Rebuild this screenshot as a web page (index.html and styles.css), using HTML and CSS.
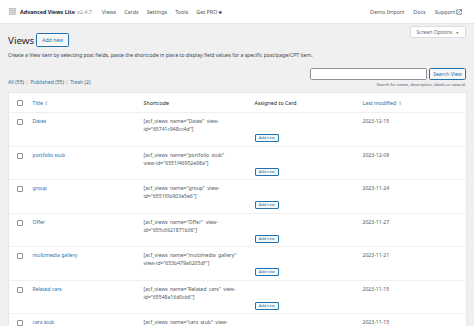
FILE: index.html
```html
<!DOCTYPE html>
<html lang="en">
<head>
    <meta charset="UTF-8">
    <meta name="viewport" content="width=device-width, initial-scale=1.0">
    <title>Views</title>
    <link rel="stylesheet" href="styles.css">
</head>
<body>
    <div class="topbar">
        <div class="brand">
            <svg class="logo" width="7" height="7" viewBox="0 0 7 7">
                <rect x="0.5" y="0.5" width="6" height="6" fill="#dcdcde" stroke="#a7aaad" stroke-width="0.6"/>
                <line x1="1.5" y1="2.5" x2="5.5" y2="2.5" stroke="#a7aaad" stroke-width="0.6"/>
                <line x1="1.5" y1="4.5" x2="5.5" y2="4.5" stroke="#a7aaad" stroke-width="0.6"/>
            </svg>
            <span class="brand-name">Advanced Views Lite</span>
            <span class="version">v2.4.7</span>
        </div>
        <nav class="nav">
            <a href="#">Views</a>
            <a href="#">Cards</a>
            <a href="#">Settings</a>
            <a href="#">Tools</a>
            <a href="#">Get PRO <span class="star">&#9733;</span></a>
        </nav>
        <nav class="nav nav-right">
            <a href="#">Demo Import</a>
            <a href="#">Docs</a>
            <a href="#">Support<svg class="ext" width="6" height="6" viewBox="0 0 6 6">
                <path d="M2.5 0.8H0.8V5.2H5.2V3.5" fill="none" stroke="#50575e" stroke-width="0.7"/>
                <path d="M3.3 0.5H5.5V2.7M5.4 0.6L2.6 3.4" fill="none" stroke="#50575e" stroke-width="0.7"/>
            </svg></a>
        </nav>
    </div>

    <div class="wrap">
        <button class="screen-options">Screen Options <span class="caret">&#9660;</span></button>

        <div class="page-head">
            <h1>Views</h1>
            <a href="#" class="btn-outline">Add new</a>
        </div>

        <p class="description">Create a View item by selecting post fields, paste the shortcode in place to display field values for a specific post/page/CPT item.</p>

        <div class="tablenav">
            <ul class="subsubsub">
                <li><a href="#">All <span class="count">(55)</span></a> |</li>
                <li><a href="#">Published <span class="count">(55)</span></a> |</li>
                <li><a href="#">Trash <span class="count">(2)</span></a></li>
            </ul>
            <div class="search-box">
                <div class="search-row">
                    <input type="search" class="search-input">
                    <button class="btn-outline search-btn">Search View</button>
                </div>
                <div class="search-help">Search for name, description, labels or view-id.</div>
            </div>
        </div>

        <table class="list-table">
            <colgroup>
                <col class="w-cb">
                <col class="w-title">
                <col class="w-short">
                <col class="w-card">
                <col class="w-date">
            </colgroup>
            <thead>
                <tr>
                    <th class="col-cb"><span class="checkbox"></span></th>
                    <th><a href="#">Title <span class="sort">&#8661;</span></a></th>
                    <th>Shortcode</th>
                    <th>Assigned to Card</th>
                    <th><a href="#">Last modified <span class="sort">&#8661;</span></a></th>
                </tr>
            </thead>
            <tbody id="rows"></tbody>
        </table>
    </div>

    <script>
      const views = [
        { name: 'Dates', id: '65741c948cc4d', date: '2023-12-15' },
        { name: 'portfolio stub', id: '6551f46952e98a', date: '2023-12-09' },
        { name: 'group', id: '6551f0b903e5e6', date: '2023-11-24' },
        { name: 'Offer', id: '655c6921871b06', date: '2023-11-27' },
        { name: 'multimedia gallery', id: '653b479a6205df', date: '2023-11-21' },
        { name: 'Related cars', id: '65548a16d0cb6', date: '2023-11-15' },
        { name: 'cars stub', id: '6554fa2c91e07', date: '2023-11-15' }
      ];

      const tbody = document.getElementById('rows');
      views.forEach(view => {
        const tr = document.createElement('tr');
        tr.innerHTML = `
          <td class="col-cb"><span class="checkbox"></span></td>
          <td><a href="#">${view.name}</a></td>
          <td class="col-short">[acf_views name="${view.name}" view-id="${view.id}"]</td>
          <td><a href="#" class="btn-outline btn-small">Add new</a></td>
          <td class="col-date">${view.date}</td>`;
        tbody.appendChild(tr);
      });
    </script>
</body>
</html>
```

FILE: styles.css
```css
body {
    margin: 0;
    background: #f0f0f1;
    font-family: "Noto Sans", sans-serif;
    font-size: 5.1px;
    color: #3c434a;
    overflow: hidden;
}

a {
    color: #2271b1;
    text-decoration: none;
}

.topbar {
    height: 23px;
    background: #fff;
    display: flex;
    align-items: center;
    padding: 0 12px 0 9px;
    font-size: 5.4px;
    box-shadow: 0 1px 1px rgba(0, 0, 0, 0.04);
}

.brand {
    display: flex;
    align-items: center;
}

.logo {
    margin-right: 4px;
}

.brand-name {
    font-weight: 700;
    color: #1d2327;
}

.version {
    color: #8c8f94;
    margin-left: 2px;
}

.nav {
    display: flex;
    gap: 8px;
    margin-left: 10px;
}

.nav a {
    color: #50575e;
    display: flex;
    align-items: center;
}

.nav-right {
    margin-left: auto;
    gap: 9px;
}

.star {
    color: #1d2327;
    margin-left: 1px;
}

.ext {
    margin-left: 1px;
}

.wrap {
    padding: 3px 8px 0 8px;
}

.screen-options {
    float: right;
    height: 12px;
    padding: 0 6px;
    background: #fff;
    border: 1px solid #dcdcde;
    border-radius: 1px;
    font-family: inherit;
    font-size: 5px;
    color: #646970;
}

.caret {
    font-size: 3.5px;
    margin-left: 2px;
}

.page-head {
    display: flex;
    align-items: center;
    gap: 2px;
    margin-top: 7px;
    height: 14px;
}

h1 {
    margin: 0;
    font-size: 9.8px;
    font-weight: 400;
    color: #1d2327;
}

.btn-outline {
    display: inline-flex;
    align-items: center;
    justify-content: center;
    box-sizing: border-box;
    height: 14px;
    padding: 0 5px;
    border: 1px solid #2271b1;
    border-radius: 1.5px;
    background: #f6f7f7;
    color: #2271b1;
    font-family: inherit;
    font-size: 5.1px;
}

.description {
    margin: 5px 0 0;
    line-height: 7px;
}

.tablenav {
    display: flex;
    justify-content: space-between;
    align-items: flex-start;
    margin-top: 9px;
}

.subsubsub {
    list-style: none;
    margin: 11px 0 0;
    padding: 0;
    display: flex;
    gap: 2px;
    color: #a7aaad;
    line-height: 7px;
}

.count {
    color: #50575e;
}

.search-box {
    display: flex;
    flex-direction: column;
    align-items: flex-end;
}

.search-row {
    display: flex;
    gap: 2px;
}

.search-input {
    box-sizing: border-box;
    width: 117px;
    height: 12px;
    border: 1px solid #8c8f94;
    border-radius: 1.5px;
    background: #fff;
    padding: 0;
}

.search-btn {
    height: 12px;
    width: 37px;
    padding: 0;
}

.search-help {
    margin-top: 2px;
    font-size: 4.1px;
    line-height: 6px;
    color: #50575e;
}

.list-table {
    margin-top: 4px;
    width: 458px;
    table-layout: fixed;
    border-collapse: collapse;
    background: #fff;
    border: 1px solid #e6e6e8;
}

.w-cb { width: 20px; }
.w-title { width: 111px; }
.w-short { width: 111px; }
.w-card { width: 108px; }
.w-date { width: 108px; }

.list-table th,
.list-table td {
    text-align: left;
    vertical-align: top;
    padding: 4px 4px 0;
    line-height: 8px;
    font-weight: 400;
}

.list-table thead th {
    height: 20px;
    box-sizing: border-box;
    vertical-align: middle;
    padding-top: 0;
    color: #1d2327;
    font-size: 5.3px;
    border-bottom: 1px solid #f0f0f1;
}

.list-table tbody tr {
    height: 33.5px;
    border-bottom: 1px solid #f0f0f1;
}

.list-table td.col-short {
    padding-right: 13.3px;
    word-spacing: 1px;
    color: #50575e;
}

.list-table td.col-date {
    color: #50575e;
}

.sort {
    color: #a7aaad;
    font-size: 5px;
}

.checkbox {
    display: inline-block;
    width: 6px;
    height: 6px;
    box-sizing: border-box;
    border: 1px solid #8c8f94;
    border-radius: 1px;
    background: #fff;
    vertical-align: middle;
    margin-left: 4px;
}

.list-table td .checkbox {
    margin-top: 1px;
}

.btn-small {
    height: 8px;
    font-size: 3.8px;
    padding: 0 3.5px;
    margin-top: 17px;
    border-width: 0.8px;
    border-radius: 1px;
}
```
